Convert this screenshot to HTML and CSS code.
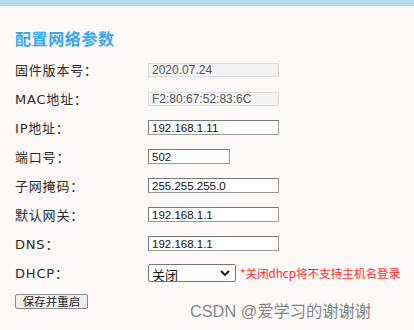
FILE: index.html
```html
<!DOCTYPE html>
<html lang="zh-CN">
<head>
<meta charset="utf-8">
<title>配置网络参数</title>
<link rel="stylesheet" href="styles.css">
</head>
<body>
<div class="topbar"></div>
<main class="panel">
  <h2 class="title">配置网络参数</h2>
  <form class="form">
    <div class="row"><label class="lbl">固件版本号：</label><input class="inp ro" type="text" value="2020.07.24" readonly></div>
    <div class="row"><label class="lbl">MAC地址：</label><input class="inp ro" type="text" value="F2:80:67:52:83:6C" readonly></div>
    <div class="row"><label class="lbl">IP地址：</label><input class="inp" type="text" value="192.168.1.11"></div>
    <div class="row"><label class="lbl">端口号：</label><input class="inp short" type="text" value="502"></div>
    <div class="row"><label class="lbl">子网掩码：</label><input class="inp" type="text" value="255.255.255.0"></div>
    <div class="row"><label class="lbl">默认网关：</label><input class="inp" type="text" value="192.168.1.1"></div>
    <div class="row"><label class="lbl">DNS：</label><input class="inp" type="text" value="192.168.1.1"></div>
    <div class="row"><label class="lbl">DHCP：</label>
      <div class="selwrap">
        <select class="sel"><option>关闭</option><option>开启</option></select>
        <svg class="chev" width="10" height="6" viewBox="0 0 10 6"><path d="M1 1 L5 5 L9 1" fill="none" stroke="#111" stroke-width="1.8"/></svg>
      </div>
      <span class="warn">*关闭dhcp将不支持主机名登录</span>
    </div>
    <button class="btn" type="button">保存并重启</button>
  </form>
</main>
<div class="watermark">CSDN @爱学习的谢谢谢</div>
</body>
</html>
```
FILE: styles.css
```css
html, body {
  margin: 0;
  padding: 0;
  background: #fcf9f8;
}
body {
  width: 414px;
  height: 330px;
  position: relative;
  overflow: hidden;
  font-family: "DejaVu Sans", "Noto Sans CJK SC", sans-serif;
}
.topbar {
  height: 6px;
  background: #b2dcec;
}
.panel {
  padding: 0 15px;
}
.title {
  margin: 22px 0 0 0;
  height: 20px;
  line-height: 20px;
  font-size: 16px;
  font-weight: bold;
  color: #3ba6f0;
  font-family: "Noto Sans CJK SC", sans-serif;
  letter-spacing: 0.6px;
}
.form {
  margin: 7px 0 0 0;
}
.row {
  display: flex;
  align-items: center;
  height: 29px;
}
.lbl {
  width: 133px;
  flex: none;
  font-size: 13px;
  letter-spacing: 0.8px;
  color: #2a2a2a;
}
.inp {
  box-sizing: border-box;
  width: 131px;
  height: 15px;
  padding: 0 3px;
  margin: 0;
  border: 1px solid #7a7a7a;
  border-right-color: #9a9a9a;
  border-bottom-color: #9a9a9a;
  background: #fff;
  font-family: "Liberation Sans", Arial, sans-serif;
  font-size: 11.5px;
  color: #111;
  outline: none;
}
.inp.ro {
  height: 14px;
  background: #f4f4f4;
  border-color: #dcdcdc;
  color: #555;
  font-size: 12px;
}
.inp.short {
  width: 82px;
}
.selwrap {
  position: relative;
  width: 88px;
  height: 18px;
  flex: none;
}
.sel {
  -webkit-appearance: none;
  appearance: none;
  box-sizing: border-box;
  width: 88px;
  height: 18px;
  margin: 0;
  padding: 0 0 0 3px;
  border: 1px solid #777;
  border-radius: 2px;
  background: #fff;
  font-family: "Noto Sans CJK SC", sans-serif;
  font-size: 13px;
  color: #111;
}
.chev {
  position: absolute;
  right: 6px;
  top: 6px;
  pointer-events: none;
}
.warn {
  margin-left: 4px;
  font-family: "Noto Sans CJK SC", sans-serif;
  font-size: 11.6px;
  color: #ff2b2b;
  white-space: nowrap;
}
.btn {
  box-sizing: border-box;
  margin-top: 7px;
  width: 73px;
  height: 15px;
  padding: 0;
  border: 1px solid #8a8a8a;
  border-radius: 2px;
  background: #efefef;
  font-family: "Noto Sans CJK SC", sans-serif;
  font-size: 11.5px;
  line-height: 13px;
  color: #222;
}
.watermark {
  position: absolute;
  left: 190px;
  top: 298px;
  font-family: "Liberation Sans", "Noto Sans CJK SC", sans-serif;
  font-size: 16.3px;
  color: rgba(90, 90, 90, 0.75);
  white-space: nowrap;
}
```
